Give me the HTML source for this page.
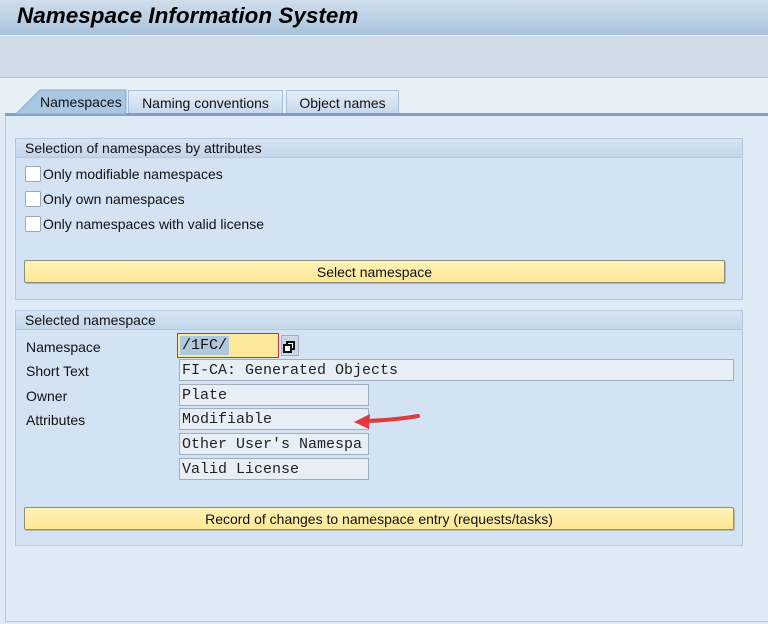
<!DOCTYPE html>
<html><head><meta charset="utf-8"><style>
*{margin:0;padding:0;box-sizing:border-box}
body{width:768px;height:624px;overflow:hidden;background:#dfe9f4;font-family:"Liberation Sans",sans-serif;font-size:14px;color:#111;position:relative}
.a{position:absolute}
#title{left:0;top:0;width:768px;height:36px;background:linear-gradient(#cfdeec,#a9c3db);border-bottom:1px solid #e8eef5}
#title span{position:absolute;left:17px;top:3px;font-size:22.5px;font-weight:bold;font-style:italic;color:#000}
#tool{left:0;top:36px;width:768px;height:42px;background:#d0dde8;border-bottom:1px solid #b9c6d2}
#tabarea{left:0;top:78px;width:768px;height:35px;background:#e8f0f7}
#line{left:5px;top:113px;width:763px;height:3px;background:#7f9fc8}
#panel{left:5px;top:116px;width:770px;height:506px;background:#deeaf5;border-left:1px solid #b8c9dc;border-bottom:1px solid #b8c9dc}
.tab{top:90px;height:23px;background:linear-gradient(#e4edf7,#c7d9ec);border:1px solid #a9bfd7;border-bottom:none;text-align:center;line-height:24px;font-size:14px;color:#111}
.grp{left:15px;width:728px;background:#d4e3f3;border:1px solid #b3c8dd}
.gh{position:absolute;left:0;top:0;right:0;height:19px;background:linear-gradient(#d6e4f3,#c3d6ea);border-bottom:1px solid #b3c8dd;padding-left:9px;line-height:19px}
.cb{width:16px;height:16px;background:#fff;border:1px solid #9aa9b8;border-radius:2px}
.btn{background:linear-gradient(#fff3b8,#fde795);border:1px solid #8f8f80;border-radius:2px;text-align:center;line-height:22px;box-shadow:1px 1px 0 #b8b8a8}
.f{height:22px;background:#e7eef5;border:1px solid #9fafbf;font-family:"Liberation Mono",monospace;font-size:15px;line-height:21px;padding-left:2px;color:#222}
.lbl{left:26px}
</style></head><body>
<div id="title" class="a"><span>Namespace Information System</span></div>
<div id="tool" class="a"></div>
<div id="tabarea" class="a"></div>
<div id="panel" class="a"></div>
<div id="line" class="a"></div>
<svg class="a" style="left:14px;top:89px" width="114" height="26"><path d="M2 25 L26 1 L112 1 L112 25 Z" fill="#a9c6e3" stroke="#8aa9ca"/></svg>
<div class="a" style="left:40px;top:90px;height:23px;line-height:25px">Namespaces</div>
<div class="a tab" style="left:128px;width:155px">Naming conventions</div>
<div class="a tab" style="left:286px;width:113px">Object names</div>

<div class="a grp" style="top:138px;height:162px"><div class="gh">Selection of namespaces by attributes</div></div>
<div class="a cb" style="left:25px;top:166px"></div><div class="a" style="left:43px;top:166px">Only modifiable namespaces</div>
<div class="a cb" style="left:25px;top:191px"></div><div class="a" style="left:43px;top:191px">Only own namespaces</div>
<div class="a cb" style="left:25px;top:216px"></div><div class="a" style="left:43px;top:216px">Only namespaces with valid license</div>
<div class="a btn" style="left:24px;top:260px;width:701px;height:23px">Select namespace</div>

<div class="a grp" style="top:310px;height:236px"><div class="gh">Selected namespace</div></div>
<div class="a lbl" style="top:339px">Namespace</div>
<div class="a lbl" style="top:363px">Short Text</div>
<div class="a lbl" style="top:388px">Owner</div>
<div class="a lbl" style="top:412px">Attributes</div>
<div class="a" style="left:177px;top:333px;width:102px;height:25px;border:1px solid #c8303a;background:#fde99a"></div>
<div class="a" style="left:180px;top:336px;height:19px;background:#b0c8de;font-family:'Liberation Mono',monospace;font-size:15px;line-height:19px;padding:0 2px">/1FC/</div>
<div class="a" style="left:281px;top:335px;width:18px;height:21px;background:#c8d6e5;border:1px solid #aab"></div>
<div class="a" style="left:286px;top:341px;width:9px;height:9px;border:2px solid #111;background:#fff"></div>
<div class="a" style="left:283px;top:344px;width:9px;height:9px;border:2px solid #111;background:#fff"></div>
<div class="a f" style="left:179px;top:359px;width:555px">FI-CA: Generated Objects</div>
<div class="a f" style="left:179px;top:384px;width:190px">Plate</div>
<div class="a f" style="left:179px;top:408px;width:190px">Modifiable</div>
<div class="a f" style="left:179px;top:433px;width:190px;overflow:hidden;white-space:nowrap">Other User's Namespa</div>
<div class="a f" style="left:179px;top:458px;width:190px">Valid License</div>
<svg class="a" style="left:350px;top:408px" width="72" height="22"><path d="M68 8 Q45 12 16 13" stroke="#e03a3a" stroke-width="4" fill="none" stroke-linecap="round"/><path d="M4 14 L20 6 L19 21 Z" fill="#e03a3a"/></svg>
<div class="a btn" style="left:24px;top:507px;width:710px;height:23px">Record of changes to namespace entry (requests/tasks)</div>
</body></html>
